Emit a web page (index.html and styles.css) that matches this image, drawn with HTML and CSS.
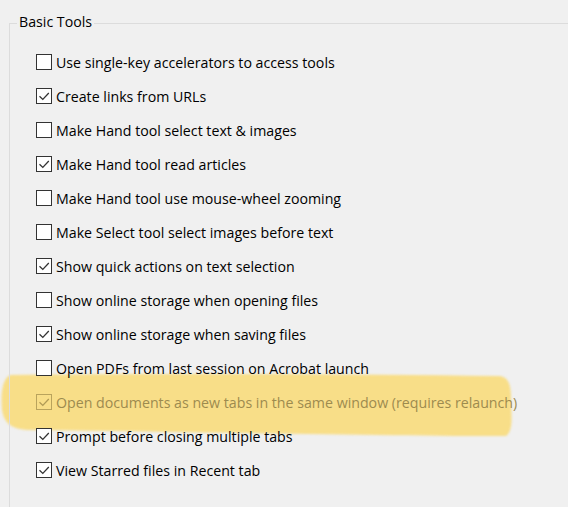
FILE: index.html
```html
<!DOCTYPE html>
<html>
<head>
<meta charset="utf-8">
<link rel="stylesheet" href="styles.css">
</head>
<body>
<svg class="highlight" viewBox="0 0 520 72" width="520" height="72">
  <path d="M10 5 C150 3 350 4 500 6 C508 7 511 14 511 28 C511 45 514 60 506 66 C400 66 200 62 28 60 C10 59 4 52 2 40 C1 28 1 10 10 5 Z"/>
</svg>
<fieldset class="group">
  <legend class="group-title">Basic Tools</legend>
  <ul class="options">
    <li class="option"><span class="box"></span><span class="label">Use single-key accelerators to access tools</span></li>
    <li class="option"><span class="box"><svg viewBox="0 0 14 14"><path d="M2.5 7.2 L5.8 10.4 L11.8 4"/></svg></span><span class="label">Create links from URLs</span></li>
    <li class="option"><span class="box"></span><span class="label">Make Hand tool select text &amp; images</span></li>
    <li class="option"><span class="box"><svg viewBox="0 0 14 14"><path d="M2.5 7.2 L5.8 10.4 L11.8 4"/></svg></span><span class="label">Make Hand tool read articles</span></li>
    <li class="option"><span class="box"></span><span class="label">Make Hand tool use mouse-wheel zooming</span></li>
    <li class="option"><span class="box"></span><span class="label">Make Select tool select images before text</span></li>
    <li class="option"><span class="box"><svg viewBox="0 0 14 14"><path d="M2.5 7.2 L5.8 10.4 L11.8 4"/></svg></span><span class="label">Show quick actions on text selection</span></li>
    <li class="option"><span class="box"></span><span class="label">Show online storage when opening files</span></li>
    <li class="option"><span class="box"><svg viewBox="0 0 14 14"><path d="M2.5 7.2 L5.8 10.4 L11.8 4"/></svg></span><span class="label">Show online storage when saving files</span></li>
    <li class="option"><span class="box"></span><span class="label">Open PDFs from last session on Acrobat launch</span></li>
    <li class="option disabled"><span class="box"><svg viewBox="0 0 14 14"><path d="M2.5 7.2 L5.8 10.4 L11.8 4"/></svg></span><span class="label">Open documents as new tabs in the same window (requires relaunch)</span></li>
    <li class="option"><span class="box"><svg viewBox="0 0 14 14"><path d="M2.5 7.2 L5.8 10.4 L11.8 4"/></svg></span><span class="label">Prompt before closing multiple tabs</span></li>
    <li class="option"><span class="box"><svg viewBox="0 0 14 14"><path d="M2.5 7.2 L5.8 10.4 L11.8 4"/></svg></span><span class="label">View Starred files in Recent tab</span></li>
  </ul>
</fieldset>
</body>
</html>
```
FILE: styles.css
```css
html, body {
  margin: 0;
  padding: 0;
  background: #f0f0f0;
  overflow: hidden;
}
body {
  width: 568px;
  height: 507px;
  position: relative;
  font-family: "Open Sans", "Noto Sans", sans-serif;
  font-size: 14.2px;
  color: #000;
}
.group {
  position: relative;
  z-index: 1;
  margin: 14px 0 0 9px;
  padding: 0 0 0 26px;
  width: 700px;
  height: 600px;
  border: 1px solid #dcdcdc;
  box-sizing: border-box;
}
.group-title {
  padding: 0 2px;
  margin-left: -19px;
  line-height: 18px;
  position: relative;
  top: -1px;
}
.options {
  list-style: none;
  margin: 0;
  padding: 13px 0 0 0;
}
.option {
  display: flex;
  align-items: center;
  height: 34px;
}
.box {
  width: 16px;
  height: 16px;
  box-sizing: border-box;
  border: 1px solid #333;
  background: #fff;
  margin-right: 4px;
  flex: none;
}
.box svg {
  display: block;
  width: 14px;
  height: 14px;
}
.box path {
  fill: none;
  stroke: #333;
  stroke-width: 1.3;
}
.disabled .box {
  border-color: #b9a35c;
  background: transparent;
}
.disabled .box path {
  stroke: #b09a55;
}
.disabled .label {
  color: #9d8b4f;
}
.highlight {
  position: absolute;
  left: 0;
  top: 370px;
  z-index: 0;
  filter: blur(1px);
}
.highlight path {
  fill: #f8de88;
}
```
